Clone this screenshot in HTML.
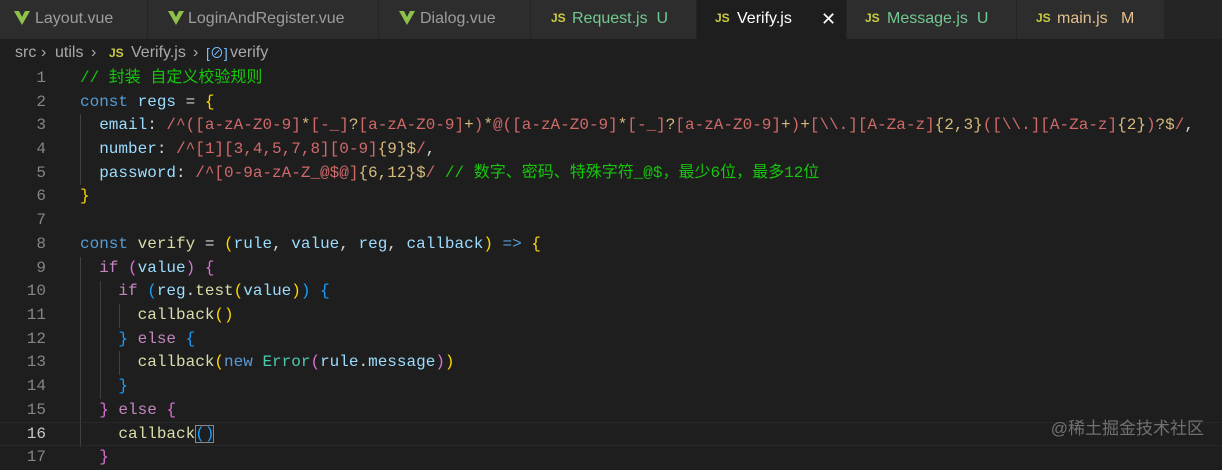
<!DOCTYPE html>
<html><head><meta charset="utf-8">
<style>
*{margin:0;padding:0;box-sizing:border-box}
body{width:1222px;height:454px;overflow:hidden;background:#1e1e1e;font-family:"Liberation Sans","Noto Sans CJK SC",sans-serif;position:relative}
.tabs{position:absolute;top:0;left:0;width:1222px;height:39px;background:#252526}
.tab{position:absolute;top:0;height:39px;background:#2d2d2d;border-right:1px solid #252526;font-size:16px;line-height:38px;color:#9d9d9d;white-space:nowrap}
.tab span.x{position:absolute;top:0}
.tab.active{background:#1e1e1e;color:#fff}
.v{display:inline-block;width:0;height:0;border-left:8px solid transparent;border-right:8px solid transparent;border-top:14px solid #8dc149;position:absolute;top:11px}
.v::after{content:"";position:absolute;left:-3px;top:-14px;border-left:3px solid transparent;border-right:3px solid transparent;border-top:6px solid #2d2d2d}
.js{color:#cbcb41;font-weight:bold;font-size:12px;position:absolute;top:-1px}
.g{color:#73c991}.m{color:#e2c08d}
.bc{position:absolute;top:43px;left:0;font-size:16px;color:#a9a9a9;line-height:20px;white-space:nowrap;width:300px;height:20px}
.bc span{position:absolute;top:0}
.code{position:absolute;top:67px;left:0;width:1222px;font-family:"Liberation Mono","Noto Sans CJK SC",monospace;font-size:16px}
.ln{height:23.7px;line-height:23.7px;white-space:pre;position:relative;color:#d4d4d4}
.ln .n{position:absolute;left:0;width:46px;text-align:right;color:#858585}
.ln .t{position:absolute;left:80px}
.cur{border-top:1px solid #282828;border-bottom:1px solid #282828}
.cur .n{color:#c6c6c6}
.guide{position:absolute;width:1px;background:#404040}
.k{color:#569cd6}.c{color:#16c60c}.p{color:#9cdcfe}.f{color:#dcdcaa}
.r{color:#d16969}.q{color:#d7ba7d}.y{color:#ffd700}.pk{color:#da70d6}.b{color:#179fff}.kw{color:#c586c0}.cl{color:#4ec9b0}
.wm{position:absolute;right:18px;top:414px;font-size:17px;color:#7a7a7a;opacity:.9}
</style></head><body>
<div class="tabs">
<div class="tab" style="left:0;width:148px"><span class="v" style="left:14px"></span><span class="x" style="left:35px">Layout.vue</span></div>
<div class="tab" style="left:148px;width:231px"><span class="v" style="left:20px"></span><span class="x" style="left:40px">LoginAndRegister.vue</span></div>
<div class="tab" style="left:379px;width:152px"><span class="v" style="left:20px"></span><span class="x" style="left:41px">Dialog.vue</span></div>
<div class="tab g" style="left:531px;width:166px"><span class="js" style="left:20px">JS</span><span class="x" style="left:41px">Request.js&nbsp; U</span></div>
<div class="tab active" style="left:697px;width:150px"><span class="js" style="left:18px">JS</span><span class="x" style="left:40px">Verify.js</span><span class="x" style="left:124px;font-size:18px">✕</span></div>
<div class="tab g" style="left:847px;width:170px"><span class="js" style="left:18px">JS</span><span class="x" style="left:40px">Message.js&nbsp; U</span></div>
<div class="tab m" style="left:1017px;width:148px"><span class="js" style="left:19px">JS</span><span class="x" style="left:40px">main.js&nbsp;&nbsp; M</span></div>
</div>
<div class="bc"><span style="left:15px">src</span><span style="left:41px">›</span><span style="left:55px">utils</span><span style="left:91px">›</span><span style="left:109px;color:#cbcb41;font-weight:bold;font-size:12px">JS</span><span style="left:131px">Verify.js</span><span style="left:193px">›</span><span style="left:206px;color:#75beff;font-size:14px">[⊘]</span><span style="left:230px">verify</span></div>
<div class="code">
<div class="guide" style="left:80px;top:47px;height:71px"></div>
<div class="guide" style="left:80px;top:190px;height:190px"></div>
<div class="guide" style="left:100px;top:214px;height:118px"></div>
<div class="guide" style="left:119px;top:237px;height:24px"></div>
<div class="guide" style="left:119px;top:284px;height:24px"></div>
<div class="ln"><span class="n">1</span><span class="t c">// 封装 自定义校验规则</span></div>
<div class="ln"><span class="n">2</span><span class="t"><span class="k">const</span> <span class="p">regs</span> = <span class="y">{</span></span></div>
<div class="ln"><span class="n">3</span><span class="t">  <span class="p">email</span>: <span class="r">/^(</span><span class="r">[a-zA-Z0-9]</span><span class="q">*</span><span class="r">[-_]</span><span class="q">?</span><span class="r">[a-zA-Z0-9]</span><span class="q">+</span><span class="r">)</span><span class="q">*</span><span class="r">@(</span><span class="r">[a-zA-Z0-9]</span><span class="q">*</span><span class="r">[-_]</span><span class="q">?</span><span class="r">[a-zA-Z0-9]</span><span class="q">+</span><span class="r">)</span><span class="q">+</span><span class="r">[\\.][A-Za-z]</span><span class="q">{2,3}</span><span class="r">(</span><span class="r">[\\.][A-Za-z]</span><span class="q">{2}</span><span class="r">)</span><span class="q">?</span><span class="q">$</span><span class="r">/</span>,</span></div>
<div class="ln"><span class="n">4</span><span class="t">  <span class="p">number</span>: <span class="r">/^[1][3,4,5,7,8][0-9]</span><span class="q">{9}$</span><span class="r">/</span>,</span></div>
<div class="ln"><span class="n">5</span><span class="t">  <span class="p">password</span>: <span class="r">/^[0-9a-zA-Z_@$@]</span><span class="q">{6,12}$</span><span class="r">/</span> <span class="c">// 数字、密码、特殊字符_@$，最少6位，最多12位</span></span></div>
<div class="ln"><span class="n">6</span><span class="t"><span class="y">}</span></span></div>
<div class="ln"><span class="n">7</span><span class="t"></span></div>
<div class="ln"><span class="n">8</span><span class="t"><span class="k">const</span> <span class="f">verify</span> = <span class="y">(</span><span class="p">rule</span>, <span class="p">value</span>, <span class="p">reg</span>, <span class="p">callback</span><span class="y">)</span> <span class="k">=&gt;</span> <span class="y">{</span></span></div>
<div class="ln"><span class="n">9</span><span class="t">  <span class="kw">if</span> <span class="pk">(</span><span class="p">value</span><span class="pk">)</span> <span class="pk">{</span></span></div>
<div class="ln"><span class="n">10</span><span class="t">    <span class="kw">if</span> <span class="b">(</span><span class="p">reg</span>.<span class="f">test</span><span class="y">(</span><span class="p">value</span><span class="y">)</span><span class="b">)</span> <span class="b">{</span></span></div>
<div class="ln"><span class="n">11</span><span class="t">      <span class="f">callback</span><span class="y">()</span></span></div>
<div class="ln"><span class="n">12</span><span class="t">    <span class="b">}</span> <span class="kw">else</span> <span class="b">{</span></span></div>
<div class="ln"><span class="n">13</span><span class="t">      <span class="f">callback</span><span class="y">(</span><span class="k">new</span> <span class="cl">Error</span><span class="pk">(</span><span class="p">rule</span>.<span class="p">message</span><span class="pk">)</span><span class="y">)</span></span></div>
<div class="ln"><span class="n">14</span><span class="t">    <span class="b">}</span></span></div>
<div class="ln"><span class="n">15</span><span class="t">  <span class="pk">}</span> <span class="kw">else</span> <span class="pk">{</span></span></div>
<div class="ln cur"><span class="n">16</span><span class="t">    <span class="f">callback</span><span class="b" style="outline:1px solid #888;outline-offset:-1px">()</span></span></div>
<div class="ln"><span class="n">17</span><span class="t">  <span class="pk">}</span></span></div>
</div>
<div class="wm">@稀土掘金技术社区</div>
</body></html>
